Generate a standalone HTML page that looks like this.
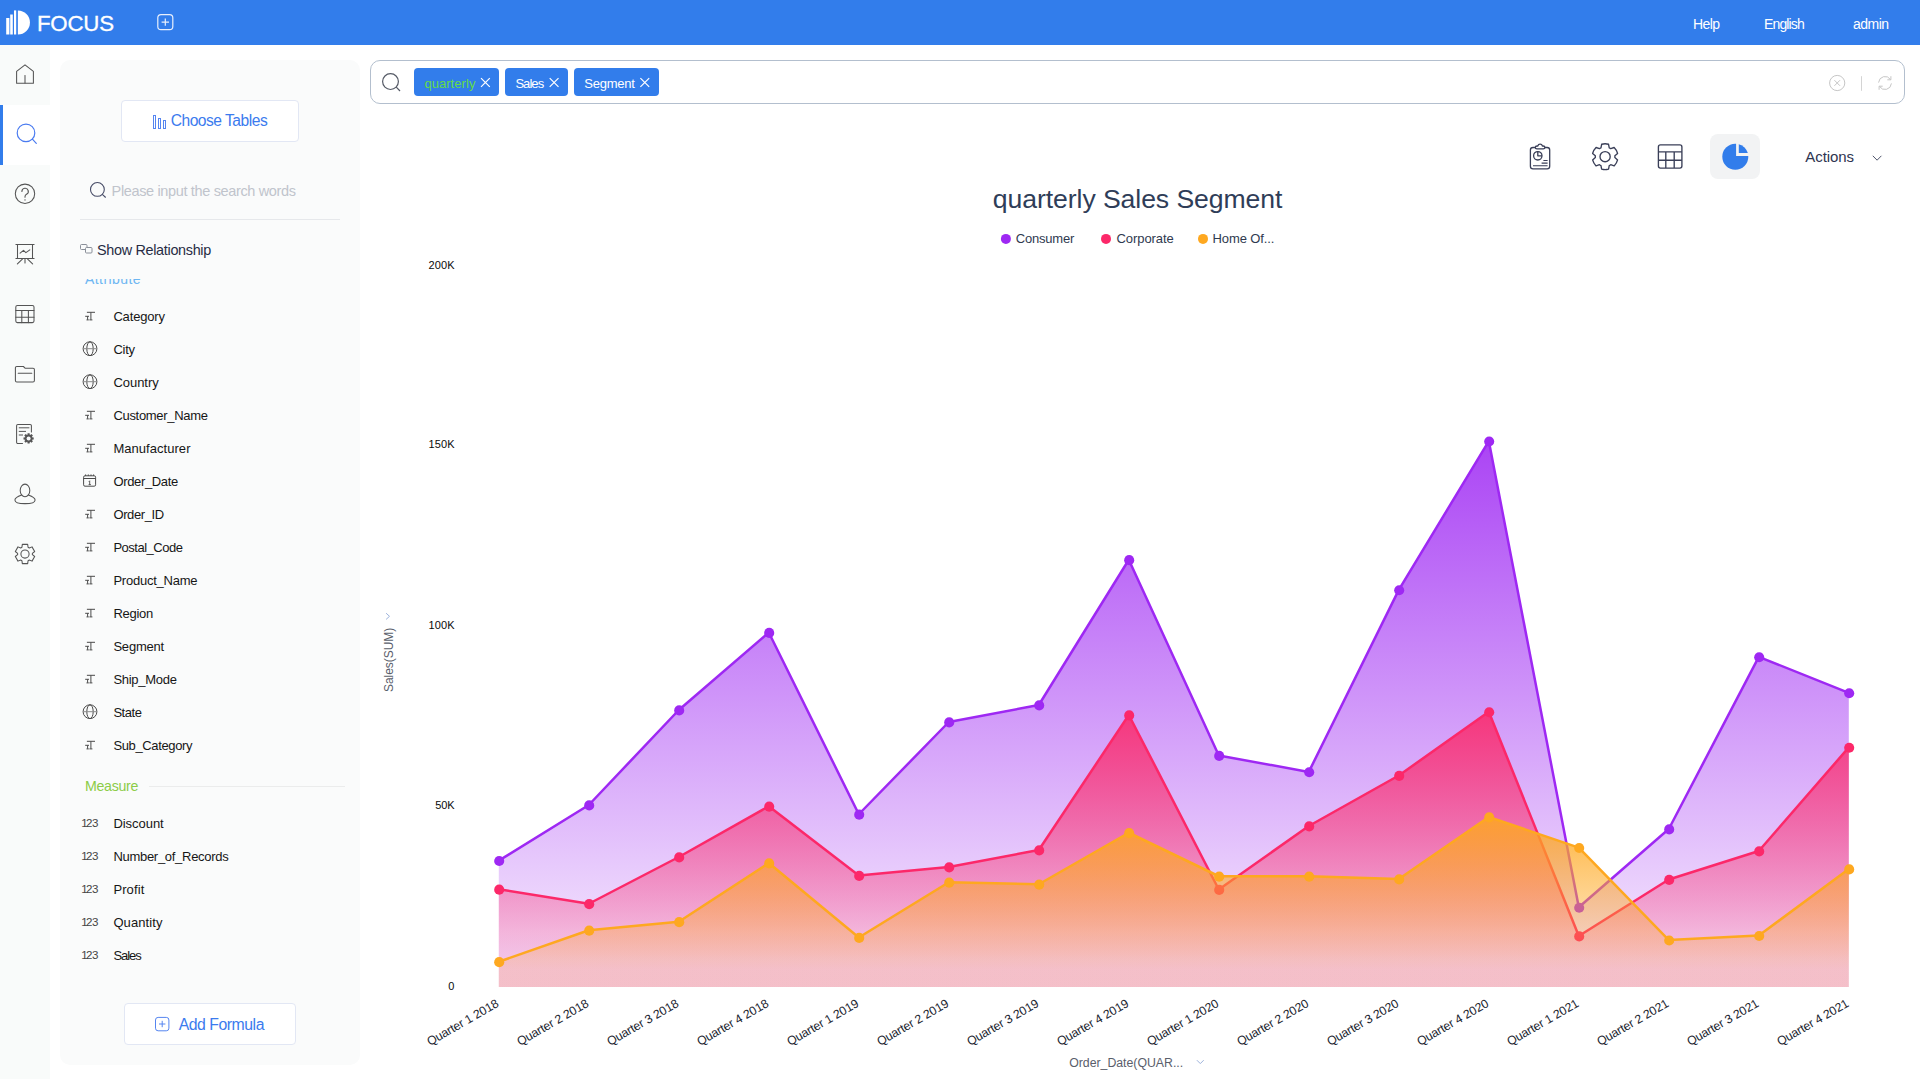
<!DOCTYPE html>
<html lang="en">
<head>
<meta charset="utf-8">
<title>DataFocus - quarterly Sales Segment</title>
<style>
*{box-sizing:border-box;margin:0;padding:0}
html,body{width:1920px;height:1079px;overflow:hidden;background:#fff}
body{font-family:"Liberation Sans",sans-serif;color:#303133;position:relative;-webkit-font-smoothing:antialiased}
.abs{position:absolute}
.t{position:absolute;white-space:nowrap;line-height:1}
/* top bar */
#topbar{position:absolute;left:0;top:0;width:1920px;height:45px;background:#327deb}
#topbar .t{color:#fff}
/* left nav */
#nav{position:absolute;left:0;top:45px;width:50px;height:1034px;background:#f9fbfa}
#nav .active{position:absolute;left:0;top:60px;width:50px;height:60px;background:#fff}
#nav .active:before{content:"";position:absolute;left:0;top:0;width:3px;height:60px;background:#327deb}
#nav svg{position:absolute;overflow:visible}
/* panel */
#panel{position:absolute;left:60px;top:60px;width:300px;height:1005px;background:#fafbfb;border-radius:10px}
.btn{position:absolute;background:#fff;border:1px solid #e2e7f4;border-radius:4px}
.item{position:absolute;left:113px;font-size:13px;line-height:1;white-space:nowrap;color:#1d1d1f}
/* search */
#search{position:absolute;left:370px;top:60px;width:1534.5px;height:44px;border:1px solid #b3bfce;border-radius:10px;background:#fff}
.tag{position:absolute;top:68px;height:28px;border-radius:4px;background:#327deb}
.tag .t{color:#fff;font-size:13px;top:8.8px}
svg{display:block}
</style>
</head>
<body>
<div id="topbar">
  <svg class="abs" style="left:0;top:0" width="200" height="45" viewBox="0 0 200 45">
    <g fill="#fff">
      <rect x="6.2" y="18" width="3.2" height="16.5"/>
      <rect x="10.2" y="14.5" width="2.6" height="20"/>
      <rect x="14" y="10.4" width="2.2" height="24.1"/>
      <path d="M17.9 10.4 A12.05 12.05 0 0 1 17.9 34.5 Z"/>
    </g>
    <rect x="157.8" y="14.6" width="15" height="15" rx="3.2" fill="none" stroke="#e8effc" stroke-width="1.2"/>
    <path d="M161.6 22.1h7.4M165.3 18.4v7.4" stroke="#e8effc" stroke-width="1.2" fill="none"/>
  </svg>
  <span class="t" style="left:36.9px;top:12.5px;font-size:22.3px;letter-spacing:-0.21px;-webkit-text-stroke:0.3px #fff">FOCUS</span>
  <span class="t" style="left:1693px;top:16.7px;font-size:14px;letter-spacing:-0.598px">Help</span>
  <span class="t" style="left:1764px;top:16.7px;font-size:14px;letter-spacing:-0.862px">English</span>
  <span class="t" style="left:1853px;top:16.7px;font-size:14px;letter-spacing:-0.533px">admin</span>
</div>
<div id="nav">
  <div class="active"></div>
  <svg style="left:0;top:0" width="50" height="560" viewBox="0 0 50 560" fill="none" stroke="#555" stroke-width="1.05" stroke-linejoin="round" stroke-linecap="round">
    <!-- home (y offset: page y - 45) -->
    <path d="M16.6 38.3V26.4L25 19.8L33.4 26.4V38.3Z"/>
    <path d="M25 30.5V38" />
    <!-- search (active) -->
    <g stroke="#4a7bf0" stroke-width="1.2">
      <circle cx="26" cy="87.9" r="8.8"/>
      <path d="M32.4 94.2L36.3 98.4"/>
    </g>
    <!-- help -->
    <circle cx="25" cy="148.8" r="9.7"/>
    <path d="M21.9 146.4a3.2 3.2 0 1 1 4.6 2.9c-1 .6-1.5 1.2-1.5 2.4v.6" stroke-width="1.1"/>
    <circle cx="25" cy="154.9" r=".7" fill="#4d4d4d" stroke="none"/>
    <!-- presentation -->
    <path d="M15.9 199.5H34.1M17.5 199.5V213.4M32.5 199.5V213.4M15.9 213.4H34.1M25 213.4V218M22.6 213.8L17.4 218.9M27.4 213.8L32.6 218.9"/>
    <path d="M20.1 208.2L23.5 205.3L25.9 207.7L29.8 204.8"/>
    <!-- table -->
    <rect x="15.8" y="260.4" width="18.2" height="17.2" rx="1.6"/>
    <path d="M15.8 265.4H34M15.8 272.2H34M21.8 265.4V277.6M28.4 265.4V277.6"/>
    <!-- folder -->
    <path d="M15.4 323V335.6a1.4 1.4 0 0 0 1.4 1.4H33a1.4 1.4 0 0 0 1.4-1.4V324.7a1.4 1.4 0 0 0-1.4-1.4H25.3L23.4 321.5H16.8a1.4 1.4 0 0 0-1.4 1.5Z"/>
    <path d="M18.2 328.3H31.8"/>
    <!-- doc gear -->
    <path d="M22.5 398.4H17.8a1.2 1.2 0 0 1-1.2-1.2V380.8a1.2 1.2 0 0 1 1.2-1.2H30.2a1.2 1.2 0 0 1 1.2 1.2V387"/>
    <path d="M19.2 382.8H29M19.2 386.4H25.6M19.2 390H22.6" stroke-width="1"/>
    <!-- user -->
    <ellipse cx="25" cy="445.4" rx="4.8" ry="6.3"/>
    <path d="M21.6 449.9C18 451.2 14.9 452.6 14.9 454.9C14.9 457.3 19.4 458.6 25 458.6S35.1 457.3 35.1 454.9C35.1 452.6 32 451.2 28.4 449.9"/>
    <!-- gear -->
    <path d="M21.93 502.27 L22.33 499.36 L27.67 499.36 L28.07 502.27 L29.30 502.98 L32.01 501.87 L34.68 506.50 L32.37 508.29 L32.37 509.71 L34.68 511.50 L32.01 516.13 L29.30 515.02 L28.07 515.73 L27.67 518.64 L22.33 518.64 L21.93 515.73 L20.70 515.02 L17.99 516.13 L15.32 511.50 L17.63 509.71 L17.63 508.29 L15.32 506.50 L17.99 501.87 L20.70 502.98Z"/>
    <circle cx="25" cy="509" r="4.1"/>
  </svg>
  <svg style="left:0;top:0" width="50" height="560" viewBox="0 0 50 560">
    <path d="M32.08 392.13 L33.70 392.41 L33.70 394.39 L32.08 394.67 L31.95 394.96 L32.91 396.31 L31.51 397.71 L30.16 396.75 L29.87 396.88 L29.59 398.50 L27.61 398.50 L27.33 396.88 L27.04 396.75 L25.69 397.71 L24.29 396.31 L25.25 394.96 L25.12 394.67 L23.50 394.39 L23.50 392.41 L25.12 392.13 L25.25 391.84 L24.29 390.49 L25.69 389.09 L27.04 390.05 L27.33 389.92 L27.61 388.30 L29.59 388.30 L29.87 389.92 L30.16 390.05 L31.51 389.09 L32.91 390.49 L31.95 391.84Z" fill="#555"/>
    <circle cx="28.6" cy="393.4" r="2" fill="#f8fafa"/>
  </svg>
</div>
<div id="panel">
<div class="btn" style="left:61px;top:40px;width:178px;height:42px"></div>
<div class="btn" style="left:64px;top:943px;width:172px;height:42px"></div>
<svg class="abs" style="left:0;top:0" width="300" height="1004" viewBox="60 60 300 1004">
<g stroke="#5585f0" stroke-width="1" fill="none"><rect x="153.5" y="115.5" width="2" height="13"/><rect x="158.5" y="118.5" width="2" height="10"/><rect x="163.5" y="120.5" width="2" height="8"/></g>
<g stroke="#464b66" stroke-width="1.1" fill="none"><circle cx="97.4" cy="189.4" r="6.9"/><path d="M102.3 194.3L105.7 197.5"/></g>
<path d="M80 219.5H340" stroke="#e6e8eb" stroke-width="1"/>
<g stroke="#8a8f99" stroke-width="1" fill="none"><rect x="80.5" y="244.5" width="6.5" height="5" rx="1"/><rect x="85.5" y="247.5" width="6.5" height="5.5" rx="1" fill="#f9fbfb"/></g>
<path d="M149 786.5H345" stroke="#ebecec" stroke-width="1"/>
<path d="M86.9 312.3H95.0M90.9 312.3V319.8M89.4 319.9H92.4M85.2 316.3H89.0M87.6 316.3V319.8M86.5 319.9H88.8" stroke="#4a4a4a" stroke-width="1" fill="none"/>
<g stroke="#4a4a4a" stroke-width="1" fill="none"><circle cx="90" cy="348.7" r="6.9"/><ellipse cx="90" cy="348.7" rx="3.2" ry="6.9"/><path d="M83.1 348.7H96.9" stroke="#8a8a8a"/></g>
<g stroke="#4a4a4a" stroke-width="1" fill="none"><circle cx="90" cy="381.7" r="6.9"/><ellipse cx="90" cy="381.7" rx="3.2" ry="6.9"/><path d="M83.1 381.7H96.9" stroke="#8a8a8a"/></g>
<path d="M86.9 411.3H95.0M90.9 411.3V418.8M89.4 418.9H92.4M85.2 415.3H89.0M87.6 415.3V418.8M86.5 418.9H88.8" stroke="#4a4a4a" stroke-width="1" fill="none"/>
<path d="M86.9 444.3H95.0M90.9 444.3V451.8M89.4 451.9H92.4M85.2 448.3H89.0M87.6 448.3V451.8M86.5 451.9H88.8" stroke="#4a4a4a" stroke-width="1" fill="none"/>
<g stroke="#4a4a4a" stroke-width="1" fill="none"><rect x="83.6" y="475.8" width="12" height="10.4" rx="1.4"/><path d="M83.6 478.5H95.6"/><path d="M85.6 474.4v1.6M88.3 474.4v1.6M91 474.4v1.6M93.6 474.4v1.6" stroke-width=".9"/><path d="M89.7 480.8V484.6M88.6 484.6H90.9M88.9 481.6L89.7 480.8" stroke-width=".9"/></g>
<path d="M86.9 510.3H95.0M90.9 510.3V517.8M89.4 517.9H92.4M85.2 514.3H89.0M87.6 514.3V517.8M86.5 517.9H88.8" stroke="#4a4a4a" stroke-width="1" fill="none"/>
<path d="M86.9 543.3H95.0M90.9 543.3V550.8M89.4 550.9H92.4M85.2 547.3H89.0M87.6 547.3V550.8M86.5 550.9H88.8" stroke="#4a4a4a" stroke-width="1" fill="none"/>
<path d="M86.9 576.3H95.0M90.9 576.3V583.8M89.4 583.9H92.4M85.2 580.3H89.0M87.6 580.3V583.8M86.5 583.9H88.8" stroke="#4a4a4a" stroke-width="1" fill="none"/>
<path d="M86.9 609.3H95.0M90.9 609.3V616.8M89.4 616.9H92.4M85.2 613.3H89.0M87.6 613.3V616.8M86.5 616.9H88.8" stroke="#4a4a4a" stroke-width="1" fill="none"/>
<path d="M86.9 642.3H95.0M90.9 642.3V649.8M89.4 649.9H92.4M85.2 646.3H89.0M87.6 646.3V649.8M86.5 649.9H88.8" stroke="#4a4a4a" stroke-width="1" fill="none"/>
<path d="M86.9 675.3H95.0M90.9 675.3V682.8M89.4 682.9H92.4M85.2 679.3H89.0M87.6 679.3V682.8M86.5 682.9H88.8" stroke="#4a4a4a" stroke-width="1" fill="none"/>
<g stroke="#4a4a4a" stroke-width="1" fill="none"><circle cx="90" cy="711.7" r="6.9"/><ellipse cx="90" cy="711.7" rx="3.2" ry="6.9"/><path d="M83.1 711.7H96.9" stroke="#8a8a8a"/></g>
<path d="M86.9 741.3H95.0M90.9 741.3V748.8M89.4 748.9H92.4M85.2 745.3H89.0M87.6 745.3V748.8M86.5 748.9H88.8" stroke="#4a4a4a" stroke-width="1" fill="none"/>
<text x="81.2 86.0 92.0" y="827.2" font-size="11.6" fill="#454545">123</text>
<text x="81.2 86.0 92.0" y="860.2" font-size="11.6" fill="#454545">123</text>
<text x="81.2 86.0 92.0" y="893.2" font-size="11.6" fill="#454545">123</text>
<text x="81.2 86.0 92.0" y="926.2" font-size="11.6" fill="#454545">123</text>
<text x="81.2 86.0 92.0" y="959.2" font-size="11.6" fill="#454545">123</text>
<g stroke="#5585f0" stroke-width="1" fill="none"><rect x="155.5" y="1017.4" width="13.4" height="13.4" rx="2.6"/><path d="M159 1024h6.4M162.2 1020.8v6.4"/></g>
</svg>
<span class="t" style="left:110.7px;top:53.2px;font-size:15.6px;color:#3b7bee;letter-spacing:-0.49px;">Choose Tables</span>
<span class="t" style="left:51.6px;top:123.9px;font-size:14.5px;color:#c0c4cc;letter-spacing:-0.352px;">Please input the search words</span>
<span class="t" style="left:37.0px;top:182.9px;font-size:14.4px;color:#272c44;letter-spacing:-0.31px;">Show Relationship</span>
<div class="abs" style="left:0;top:219.39999999999998px;width:300px;height:16px;overflow:hidden"><span class="t" style="left:25px;top:-7.6px;font-size:14px;color:#6db6f2;letter-spacing:0.42px">Attribute</span></div>
<span class="t" style="left:53.4px;top:250.1px;font-size:13px;color:#161616;letter-spacing:-0.164px;">Category</span>
<span class="t" style="left:53.4px;top:283.1px;font-size:13px;color:#161616;letter-spacing:-0.265px;">City</span>
<span class="t" style="left:53.4px;top:316.1px;font-size:13px;color:#161616;letter-spacing:-0.03px;">Country</span>
<span class="t" style="left:53.4px;top:349.1px;font-size:13px;color:#161616;letter-spacing:-0.305px;">Customer_Name</span>
<span class="t" style="left:53.4px;top:382.1px;font-size:13px;color:#161616;letter-spacing:0.045px;">Manufacturer</span>
<span class="t" style="left:53.4px;top:415.1px;font-size:13px;color:#161616;letter-spacing:-0.341px;">Order_Date</span>
<span class="t" style="left:53.4px;top:448.1px;font-size:13px;color:#161616;letter-spacing:-0.374px;">Order_ID</span>
<span class="t" style="left:53.4px;top:481.1px;font-size:13px;color:#161616;letter-spacing:-0.485px;">Postal_Code</span>
<span class="t" style="left:53.4px;top:514.1px;font-size:13px;color:#161616;letter-spacing:-0.238px;">Product_Name</span>
<span class="t" style="left:53.4px;top:547.1px;font-size:13px;color:#161616;letter-spacing:-0.271px;">Region</span>
<span class="t" style="left:53.4px;top:580.1px;font-size:13px;color:#161616;letter-spacing:-0.198px;">Segment</span>
<span class="t" style="left:53.4px;top:613.1px;font-size:13px;color:#161616;letter-spacing:-0.273px;">Ship_Mode</span>
<span class="t" style="left:53.4px;top:646.1px;font-size:13px;color:#161616;letter-spacing:-0.442px;">State</span>
<span class="t" style="left:53.4px;top:679.1px;font-size:13px;color:#161616;letter-spacing:-0.365px;">Sub_Category</span>
<span class="t" style="left:25.0px;top:718.8px;font-size:14.2px;color:#8ccc48;letter-spacing:-0.302px;">Measure</span>
<span class="t" style="left:53.4px;top:757.0px;font-size:13px;color:#161616;letter-spacing:-0.035px;">Discount</span>
<span class="t" style="left:53.4px;top:790.0px;font-size:13px;color:#161616;letter-spacing:-0.288px;">Number_of_Records</span>
<span class="t" style="left:53.4px;top:823.0px;font-size:13px;color:#161616;letter-spacing:0.101px;">Profit</span>
<span class="t" style="left:53.4px;top:856.0px;font-size:13px;color:#161616;letter-spacing:0.097px;">Quantity</span>
<span class="t" style="left:53.4px;top:889.0px;font-size:13px;color:#161616;letter-spacing:-1.044px;">Sales</span>
<span class="t" style="left:118.7px;top:956.9px;font-size:15.8px;color:#3b7bee;letter-spacing:-0.469px;">Add Formula</span>
</div>
<div id="search"></div>
<div class="tag" style="left:414px;width:84.60000000000002px"><span class="t" style="left:10.4px;color:#63dc49;letter-spacing:0.053px">quarterly</span><svg class="abs" style="left:0;top:0" width="84.60000000000002" height="28"><path d="M67.0 10.1L75.8 18.9M75.8 10.1L67.0 18.9" stroke="#fff" stroke-width="1.2" fill="none"/></svg></div>
<div class="tag" style="left:505px;width:62.60000000000002px"><span class="t" style="left:10.4px;color:#fff;letter-spacing:-0.944px">Sales</span><svg class="abs" style="left:0;top:0" width="62.60000000000002" height="28"><path d="M44.7 10.1L53.5 18.9M53.5 10.1L44.7 18.9" stroke="#fff" stroke-width="1.2" fill="none"/></svg></div>
<div class="tag" style="left:574px;width:84.79999999999995px"><span class="t" style="left:10.2px;color:#fff;letter-spacing:-0.216px">Segment</span><svg class="abs" style="left:0;top:0" width="84.79999999999995" height="28"><path d="M66.4 10.1L75.2 18.9M75.2 10.1L66.4 18.9" stroke="#fff" stroke-width="1.2" fill="none"/></svg></div>
<div class="abs" style="left:1710px;top:134px;width:50px;height:45px;border-radius:8px;background:#f2f3f4"></div>
<svg class="abs" style="left:0;top:45px" width="1920" height="150" viewBox="0 45 1920 150" fill="none">
<g stroke="#555a66" stroke-width="1.2"><circle cx="390.5" cy="81.6" r="7.9"/><path d="M396.3 87.2L400 91"/></g>
<g stroke="#c6c6c6" stroke-width="1"><circle cx="1837.2" cy="83" r="7.6"/><path d="M1834.4 80.2l5.6 5.6M1840 80.2l-5.6 5.6"/></g>
<path d="M1861.5 76.2V90.8" stroke="#d4d4d4" stroke-width="1"/>
<g stroke="#c6c6c6" stroke-width="1" stroke-linecap="round"><path d="M1878.6 82.2A6.5 6.5 0 0 1 1890.4 79.3"/><path d="M1891.4 83.8A6.5 6.5 0 0 1 1879.6 86.7"/><path d="M1890.9 76.6V79.8H1887.7" /><path d="M1879.1 89.4V86.2H1882.3"/></g>
<g stroke="#3a3f58" stroke-width="1.3" stroke-linejoin="round"><rect x="1530.4" y="147.5" width="19.3" height="21.3" rx="2.6"/><path d="M1535.3 147.4c0-1 .8-1.4 1.8-1.4h.7c.3-1.2 1.1-1.9 2.3-1.9s2 .7 2.3 1.900h.7c1 0 1.800.4 1.800 1.400c0 .9-.6 1.400-1.600 1.400h-6.4c-1 0-1.600-.5-1.600-1.400z" fill="#fff"/><circle cx="1537.8" cy="155.8" r="4.2"/><path d="M1537.8 151.6V155.8H1542"/><path d="M1543.4 160.5H1547.600M1541.600 163.100H1547.600M1533 165.800H1547.600" stroke-width="1.100"/></g>
<path d="M1600.96 147.82L1601.65 144.27A12.90 12.90 0 0 1 1608.55 144.27L1609.24 147.82A9.80 9.80 0 0 1 1610.72 148.67L1614.14 147.50A12.90 12.90 0 0 1 1617.59 153.47L1614.86 155.85A9.80 9.80 0 0 1 1614.86 157.55L1617.59 159.93A12.90 12.90 0 0 1 1614.14 165.90L1610.72 164.73A9.80 9.80 0 0 1 1609.24 165.58L1608.55 169.13A12.90 12.90 0 0 1 1601.65 169.13L1600.96 165.58A9.80 9.80 0 0 1 1599.48 164.73L1596.06 165.90A12.90 12.90 0 0 1 1592.61 159.93L1595.34 157.55A9.80 9.80 0 0 1 1595.34 155.85L1592.61 153.47A12.90 12.90 0 0 1 1596.06 147.50L1599.48 148.67A9.80 9.80 0 0 1 1600.96 147.82Z" stroke="#3a3f58" stroke-width="1.35" stroke-linejoin="round"/><circle cx="1605.1" cy="156.7" r="5.1" stroke="#3a3f58" stroke-width="1.35"/>
<g stroke="#3a3f58" stroke-width="1.35"><rect x="1658.4" y="144.9" width="23.500" height="23.200" rx="2"/><path d="M1658.4 151.800H1681.900M1658.4 160.200H1681.900M1665.800 151.800V168.100M1674.200 151.800V168.100"/></g>
<clipPath id="pm"><path d="M1700 120H1736.100V156H1760V190H1700Z"/></clipPath><clipPath id="pw"><rect x="1738.8" y="130" width="30" height="22.9"/></clipPath>
<circle cx="1735.3" cy="156.7" r="13" fill="#327deb" clip-path="url(#pm)"/><circle cx="1735.3" cy="156.7" r="13" fill="#327deb" clip-path="url(#pw)"/>
<path d="M1872.8 155.800L1877.100 160.200L1881.400 155.800" stroke="#50556c" stroke-width="1"/>
</svg>
<span class="t" style="left:1805.3px;top:149.1px;font-size:15px;color:#2e3450;letter-spacing:-0.082px">Actions</span>
<svg class="abs" style="left:360px;top:180px" width="1560" height="899" viewBox="360 180 1560 899">
<defs>
<linearGradient id="gp" gradientUnits="userSpaceOnUse" x1="0" y1="441.1" x2="0" y2="986.9"><stop offset="0" stop-color="#9e28f3" stop-opacity="0.87"/><stop offset="0.9" stop-color="#9e28f3" stop-opacity="0.15"/><stop offset="1" stop-color="#9e28f3" stop-opacity="0.15"/></linearGradient>
<linearGradient id="gk" gradientUnits="userSpaceOnUse" x1="0" y1="711.8" x2="0" y2="986.9"><stop offset="0" stop-color="#fc2869" stop-opacity="0.87"/><stop offset="0.9" stop-color="#fc2869" stop-opacity="0.15"/><stop offset="1" stop-color="#fc2869" stop-opacity="0.15"/></linearGradient>
<linearGradient id="go" gradientUnits="userSpaceOnUse" x1="0" y1="817.0" x2="0" y2="986.9"><stop offset="0" stop-color="#fea820" stop-opacity="0.87"/><stop offset="0.9" stop-color="#fea820" stop-opacity="0.15"/><stop offset="1" stop-color="#fea820" stop-opacity="0.15"/></linearGradient>
</defs>
<polygon points="498.8,986.9 498.8,860.60 588.8,805.00 678.8,710.00 768.8,632.50 858.8,814.25 948.8,722.00 1038.8,705.00 1128.8,559.75 1218.8,755.50 1308.8,771.90 1398.8,589.90 1488.8,441.10 1578.8,907.30 1668.8,829.00 1758.8,656.80 1848.8,692.80 1848.8,986.9" fill="url(#gp)"/>
<polyline points="498.8,860.60 588.8,805.00 678.8,710.00 768.8,632.50 858.8,814.25 948.8,722.00 1038.8,705.00 1128.8,559.75 1218.8,755.50 1308.8,771.90 1398.8,589.90 1488.8,441.10 1578.8,907.30 1668.8,829.00 1758.8,656.80 1848.8,692.80" fill="none" stroke="#9e28f3" stroke-width="2.5" stroke-linejoin="round"/>
<g fill="#9e28f3"><circle cx="499.2" cy="861.00" r="5.05"/><circle cx="589.2" cy="805.40" r="5.05"/><circle cx="679.2" cy="710.40" r="5.05"/><circle cx="769.2" cy="632.90" r="5.05"/><circle cx="859.2" cy="814.65" r="5.05"/><circle cx="949.2" cy="722.40" r="5.05"/><circle cx="1039.2" cy="705.40" r="5.05"/><circle cx="1129.2" cy="560.15" r="5.05"/><circle cx="1219.2" cy="755.90" r="5.05"/><circle cx="1309.2" cy="772.30" r="5.05"/><circle cx="1399.2" cy="590.30" r="5.05"/><circle cx="1489.2" cy="441.50" r="5.05"/><circle cx="1579.2" cy="907.70" r="5.05"/><circle cx="1669.2" cy="829.40" r="5.05"/><circle cx="1759.2" cy="657.20" r="5.05"/><circle cx="1849.2" cy="693.20" r="5.05"/></g>
<polygon points="498.8,986.9 498.8,889.25 588.8,903.75 678.8,857.00 768.8,806.25 858.8,875.50 948.8,867.00 1038.8,850.00 1128.8,715.00 1218.8,889.50 1308.8,826.00 1398.8,775.50 1488.8,711.80 1578.8,936.00 1668.8,879.50 1758.8,851.00 1848.8,747.40 1848.8,986.9" fill="url(#gk)"/>
<polyline points="498.8,889.25 588.8,903.75 678.8,857.00 768.8,806.25 858.8,875.50 948.8,867.00 1038.8,850.00 1128.8,715.00 1218.8,889.50 1308.8,826.00 1398.8,775.50 1488.8,711.80 1578.8,936.00 1668.8,879.50 1758.8,851.00 1848.8,747.40" fill="none" stroke="#fc2869" stroke-width="2.5" stroke-linejoin="round"/>
<g fill="#fc2869"><circle cx="499.2" cy="889.65" r="5.05"/><circle cx="589.2" cy="904.15" r="5.05"/><circle cx="679.2" cy="857.40" r="5.05"/><circle cx="769.2" cy="806.65" r="5.05"/><circle cx="859.2" cy="875.90" r="5.05"/><circle cx="949.2" cy="867.40" r="5.05"/><circle cx="1039.2" cy="850.40" r="5.05"/><circle cx="1129.2" cy="715.40" r="5.05"/><circle cx="1219.2" cy="889.90" r="5.05"/><circle cx="1309.2" cy="826.40" r="5.05"/><circle cx="1399.2" cy="775.90" r="5.05"/><circle cx="1489.2" cy="712.20" r="5.05"/><circle cx="1579.2" cy="936.40" r="5.05"/><circle cx="1669.2" cy="879.90" r="5.05"/><circle cx="1759.2" cy="851.40" r="5.05"/><circle cx="1849.2" cy="747.80" r="5.05"/></g>
<polygon points="498.8,986.9 498.8,961.75 588.8,930.25 678.8,921.75 768.8,863.00 858.8,937.50 948.8,882.25 1038.8,884.25 1128.8,832.75 1218.8,876.25 1308.8,876.25 1398.8,879.00 1488.8,817.00 1578.8,847.60 1668.8,940.10 1758.8,935.60 1848.8,869.00 1848.8,986.9" fill="url(#go)"/>
<polyline points="498.8,961.75 588.8,930.25 678.8,921.75 768.8,863.00 858.8,937.50 948.8,882.25 1038.8,884.25 1128.8,832.75 1218.8,876.25 1308.8,876.25 1398.8,879.00 1488.8,817.00 1578.8,847.60 1668.8,940.10 1758.8,935.60 1848.8,869.00" fill="none" stroke="#fea820" stroke-width="2.5" stroke-linejoin="round"/>
<g fill="#fea820"><circle cx="499.2" cy="962.15" r="5.05"/><circle cx="589.2" cy="930.65" r="5.05"/><circle cx="679.2" cy="922.15" r="5.05"/><circle cx="769.2" cy="863.40" r="5.05"/><circle cx="859.2" cy="937.90" r="5.05"/><circle cx="949.2" cy="882.65" r="5.05"/><circle cx="1039.2" cy="884.65" r="5.05"/><circle cx="1129.2" cy="833.15" r="5.05"/><circle cx="1219.2" cy="876.65" r="5.05"/><circle cx="1309.2" cy="876.65" r="5.05"/><circle cx="1399.2" cy="879.40" r="5.05"/><circle cx="1489.2" cy="817.40" r="5.05"/><circle cx="1579.2" cy="848.00" r="5.05"/><circle cx="1669.2" cy="940.50" r="5.05"/><circle cx="1759.2" cy="936.00" r="5.05"/><circle cx="1849.2" cy="869.40" r="5.05"/></g>
<text x="992.8" y="207.9" font-size="26.6" fill="#2f3d58" textLength="289.6" lengthAdjust="spacing">quarterly Sales Segment</text>
<circle cx="1005.9" cy="238.9" r="5" fill="#9e28f3"/><text x="1015.8" y="243.3" font-size="13" fill="#2f3a4f" textLength="58.5" lengthAdjust="spacing">Consumer</text>
<circle cx="1106" cy="238.9" r="5" fill="#fc2869"/><text x="1116.5" y="243.3" font-size="13" fill="#2f3a4f" textLength="57.3" lengthAdjust="spacing">Corporate</text>
<circle cx="1203" cy="238.9" r="5" fill="#fea820"/><text x="1212.6" y="243.3" font-size="13" fill="#2f3a4f" textLength="61.7" lengthAdjust="spacing">Home Of...</text>
<text x="428.6" y="268.9" font-size="11" fill="#0a0a0a" textLength="25.9" lengthAdjust="spacing">200K</text>
<text x="428.6" y="448.4" font-size="11" fill="#0a0a0a" textLength="25.9" lengthAdjust="spacing">150K</text>
<text x="428.6" y="629.0" font-size="11" fill="#0a0a0a" textLength="25.9" lengthAdjust="spacing">100K</text>
<text x="435.2" y="809.0" font-size="11" fill="#0a0a0a" textLength="19.3" lengthAdjust="spacing">50K</text>
<text x="448.2" y="990.0" font-size="11" fill="#0a0a0a" textLength="6.3" lengthAdjust="spacing">0</text>
<text transform="translate(393.2,659.9) rotate(-90)" text-anchor="middle" font-size="12" fill="#5a5e6b" textLength="64.4" lengthAdjust="spacing">Sales(SUM)</text>
<path d="M386.1 613.2L389.5 616.3L386.1 619.4" fill="none" stroke="#9db3dc" stroke-width="1"/>
<text transform="translate(499.5,1005.9) rotate(-30)" text-anchor="end" font-size="12.2" fill="#20232e" textLength="80.4" lengthAdjust="spacing">Quarter 1 2018</text>
<text transform="translate(589.5,1005.9) rotate(-30)" text-anchor="end" font-size="12.2" fill="#20232e" textLength="80.4" lengthAdjust="spacing">Quarter 2 2018</text>
<text transform="translate(679.5,1005.9) rotate(-30)" text-anchor="end" font-size="12.2" fill="#20232e" textLength="80.4" lengthAdjust="spacing">Quarter 3 2018</text>
<text transform="translate(769.5,1005.9) rotate(-30)" text-anchor="end" font-size="12.2" fill="#20232e" textLength="80.4" lengthAdjust="spacing">Quarter 4 2018</text>
<text transform="translate(859.5,1005.9) rotate(-30)" text-anchor="end" font-size="12.2" fill="#20232e" textLength="80.4" lengthAdjust="spacing">Quarter 1 2019</text>
<text transform="translate(949.5,1005.9) rotate(-30)" text-anchor="end" font-size="12.2" fill="#20232e" textLength="80.4" lengthAdjust="spacing">Quarter 2 2019</text>
<text transform="translate(1039.5,1005.9) rotate(-30)" text-anchor="end" font-size="12.2" fill="#20232e" textLength="80.4" lengthAdjust="spacing">Quarter 3 2019</text>
<text transform="translate(1129.5,1005.9) rotate(-30)" text-anchor="end" font-size="12.2" fill="#20232e" textLength="80.4" lengthAdjust="spacing">Quarter 4 2019</text>
<text transform="translate(1219.5,1005.9) rotate(-30)" text-anchor="end" font-size="12.2" fill="#20232e" textLength="80.4" lengthAdjust="spacing">Quarter 1 2020</text>
<text transform="translate(1309.5,1005.9) rotate(-30)" text-anchor="end" font-size="12.2" fill="#20232e" textLength="80.4" lengthAdjust="spacing">Quarter 2 2020</text>
<text transform="translate(1399.5,1005.9) rotate(-30)" text-anchor="end" font-size="12.2" fill="#20232e" textLength="80.4" lengthAdjust="spacing">Quarter 3 2020</text>
<text transform="translate(1489.5,1005.9) rotate(-30)" text-anchor="end" font-size="12.2" fill="#20232e" textLength="80.4" lengthAdjust="spacing">Quarter 4 2020</text>
<text transform="translate(1579.5,1005.9) rotate(-30)" text-anchor="end" font-size="12.2" fill="#20232e" textLength="80.4" lengthAdjust="spacing">Quarter 1 2021</text>
<text transform="translate(1669.5,1005.9) rotate(-30)" text-anchor="end" font-size="12.2" fill="#20232e" textLength="80.4" lengthAdjust="spacing">Quarter 2 2021</text>
<text transform="translate(1759.5,1005.9) rotate(-30)" text-anchor="end" font-size="12.2" fill="#20232e" textLength="80.4" lengthAdjust="spacing">Quarter 3 2021</text>
<text transform="translate(1849.5,1005.9) rotate(-30)" text-anchor="end" font-size="12.2" fill="#20232e" textLength="80.4" lengthAdjust="spacing">Quarter 4 2021</text>
<text x="1069.2" y="1067" font-size="12.3" fill="#5a5e6b" textLength="113.9" lengthAdjust="spacing">Order_Date(QUAR...</text>
<path d="M1196.9 1060.2L1200.3 1063.6L1203.7 1060.2" fill="none" stroke="#9db3dc" stroke-width="1"/>
</svg>
</body>
</html>
